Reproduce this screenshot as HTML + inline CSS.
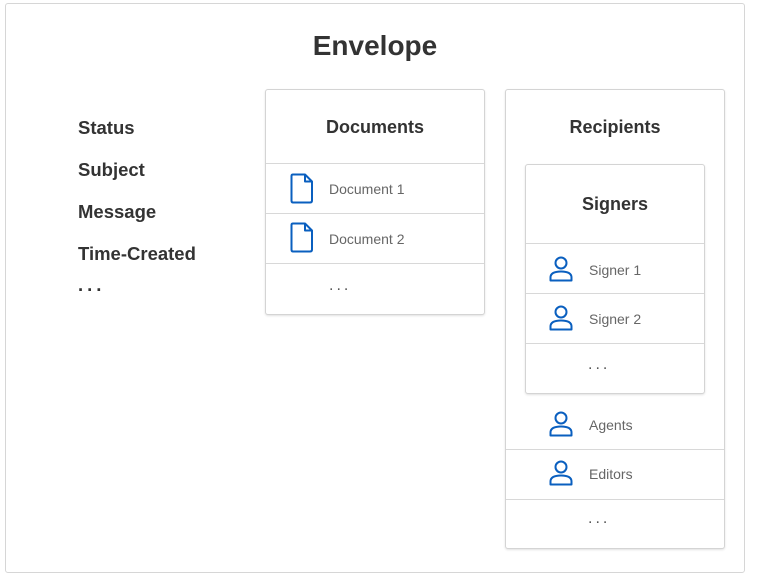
<!DOCTYPE html>
<html><head><meta charset="utf-8"><style>
*{margin:0;padding:0;box-sizing:border-box}
body{width:759px;height:587px;background:#fff;font-family:"Liberation Sans",Arial,sans-serif;position:relative;overflow:hidden}
.abs{position:absolute}
.outer{left:5px;top:3px;width:740px;height:570px;border:1px solid #d6d6d6;border-radius:3px}
.title{left:0;width:750px;top:30px;text-align:center;font-size:28px;font-weight:bold;color:#333}
.lbl{left:78px;font-size:18.5px;font-weight:bold;color:#333}
.box{border:1px solid #d4d4d4;border-radius:3px;background:#fff;box-shadow:0 1px 2px rgba(0,0,0,.12)}
.hd{position:absolute;left:0;right:0;text-align:center;font-size:18px;font-weight:bold;color:#333}
.line{position:absolute;left:0;right:0;height:1px;background:#d8d8d8}
.txt{position:absolute;font-size:14px;color:#666}
.dots{position:absolute;font-size:16px;color:#555;letter-spacing:3px}
svg{position:absolute}
</style></head><body>
<div class="abs outer"></div>
<div class="abs title">Envelope</div>
<div class="abs lbl" style="top:117px">Status</div>
<div class="abs lbl" style="top:159px">Subject</div>
<div class="abs lbl" style="top:201px">Message</div>
<div class="abs lbl" style="top:243px">Time-Created</div>
<div class="abs lbl" style="top:274px;letter-spacing:4px">...</div>

<div class="abs box" style="left:265px;top:89px;width:220px;height:226px">
  <div class="hd" style="top:27px">Documents</div>
  <div class="line" style="top:73px"></div>
  <div class="line" style="top:123px"></div>
  <div class="line" style="top:173px"></div>
</div>
<svg style="left:290px;top:173px" width="24" height="31" viewBox="0 0 24 31"><path d="M3 1.5H15L22 8.5V27.5Q22 29.5 20 29.5H3Q1.5 29.5 1.5 27.5V3Q1.5 1.5 3 1.5ZM15 1.5V8.5H22" fill="none" stroke="#0a5fbf" stroke-width="2" stroke-linejoin="round"/></svg>
<svg style="left:290px;top:222px" width="24" height="31" viewBox="0 0 24 31"><path d="M3 1.5H15L22 8.5V27.5Q22 29.5 20 29.5H3Q1.5 29.5 1.5 27.5V3Q1.5 1.5 3 1.5ZM15 1.5V8.5H22" fill="none" stroke="#0a5fbf" stroke-width="2" stroke-linejoin="round"/></svg>
<div class="txt" style="left:329px;top:181px">Document 1</div>
<div class="txt" style="left:329px;top:231px">Document 2</div>
<div class="dots" style="left:329px;top:277px">...</div>

<div class="abs box" style="left:505px;top:89px;width:220px;height:460px">
  <div class="hd" style="top:27px">Recipients</div>
  <div class="line" style="top:359px"></div>
  <div class="line" style="top:409px"></div>
</div>
<div class="abs box" style="left:525px;top:164px;width:180px;height:230px">
  <div class="hd" style="top:29px">Signers</div>
  <div class="line" style="top:78px"></div>
  <div class="line" style="top:128px"></div>
  <div class="line" style="top:178px"></div>
</div>
<svg style="left:549px;top:256px" width="24" height="27" viewBox="0 0 24 27"><circle cx="12" cy="7" r="5.5" fill="none" stroke="#0a5fbf" stroke-width="2"/><path d="M1.5 24.5V21.5Q1.5 15.5 12 15.5Q22.5 15.5 22.5 21.5V24.5Z" fill="none" stroke="#0a5fbf" stroke-width="2" stroke-linejoin="round"/></svg>
<svg style="left:549px;top:305px" width="24" height="27" viewBox="0 0 24 27"><circle cx="12" cy="7" r="5.5" fill="none" stroke="#0a5fbf" stroke-width="2"/><path d="M1.5 24.5V21.5Q1.5 15.5 12 15.5Q22.5 15.5 22.5 21.5V24.5Z" fill="none" stroke="#0a5fbf" stroke-width="2" stroke-linejoin="round"/></svg>
<svg style="left:549px;top:411px" width="24" height="27" viewBox="0 0 24 27"><circle cx="12" cy="7" r="5.5" fill="none" stroke="#0a5fbf" stroke-width="2"/><path d="M1.5 24.5V21.5Q1.5 15.5 12 15.5Q22.5 15.5 22.5 21.5V24.5Z" fill="none" stroke="#0a5fbf" stroke-width="2" stroke-linejoin="round"/></svg>
<svg style="left:549px;top:460px" width="24" height="27" viewBox="0 0 24 27"><circle cx="12" cy="7" r="5.5" fill="none" stroke="#0a5fbf" stroke-width="2"/><path d="M1.5 24.5V21.5Q1.5 15.5 12 15.5Q22.5 15.5 22.5 21.5V24.5Z" fill="none" stroke="#0a5fbf" stroke-width="2" stroke-linejoin="round"/></svg>
<div class="txt" style="left:589px;top:262px">Signer 1</div>
<div class="txt" style="left:589px;top:311px">Signer 2</div>
<div class="dots" style="left:588px;top:356px">...</div>
<div class="txt" style="left:589px;top:417px">Agents</div>
<div class="txt" style="left:589px;top:466px">Editors</div>
<div class="dots" style="left:588px;top:510px">...</div>
</body></html>
